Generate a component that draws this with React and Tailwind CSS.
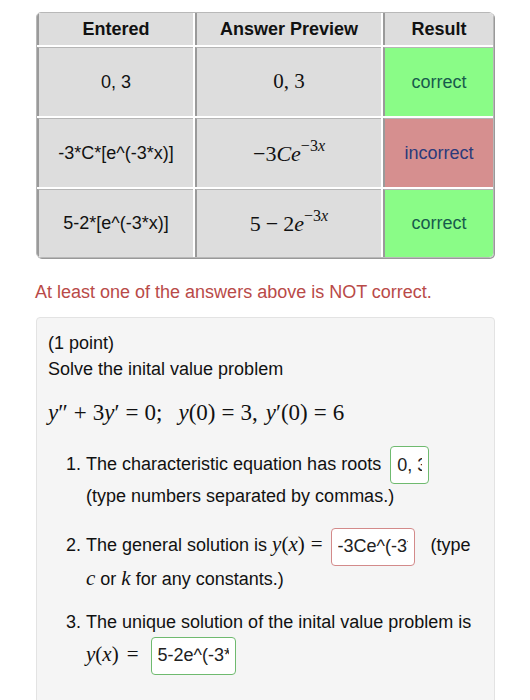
import React from "react";

const sans = { fontFamily: '"Liberation Sans", Arial, sans-serif' };

function M({ children, className = "" }) {
  return (
    <span className={`font-['Liberation_Serif',_'Times_New_Roman',_serif] ${className}`}>{children}</span>
  );
}

function I({ children }) {
  return <span className="italic">{children}</span>;
}

function Op({ children, m = "mx-[5px]" }) {
  return <span className={m}>{children}</span>;
}

function Cell({ children, bg = "bg-[#dddddd]", className = "" }) {
  return (
    <div className={`${bg} border-l-2 border-t border-l-[#9a9a9a] border-t-[#b5b5b5] flex items-center justify-center ${className}`}>
      {children}
    </div>
  );
}

function Box({ value, color, w, className = "" }) {
  return (
    <input
      readOnly
      value={value}
      className={`inline-block align-middle h-[38px] -my-[4px] rounded-[4px] border bg-white px-[6px] text-[18px] text-[#222] outline-none ${color} ${w} ${className}`}
      style={sans}
    />
  );
}

export default function App() {
  return (
    <div className="bg-white w-[530px] h-[700px] overflow-hidden text-[#111]" style={sans}>
      <div className="pt-[12px] pl-[36px]">
        <div className="w-[458px] border border-[#b8b8b8] rounded-[5px] shadow-[1px_1px_0_#999] overflow-hidden">
          <div className="grid grid-cols-[156px_186px_110px] gap-[2px] bg-white">
            <Cell className="h-[32px] border-t-0 text-[18px] font-bold">Entered</Cell>
            <Cell className="h-[32px] border-t-0 text-[18px] font-bold">Answer Preview</Cell>
            <Cell className="h-[32px] border-t-0 text-[18px] font-bold">Result</Cell>

            <Cell className="h-[69px] text-[18px]">0, 3</Cell>
            <Cell className="h-[69px]"><M className="text-[21px]">0, 3</M></Cell>
            <Cell bg="bg-[#8afc87]" className="h-[69px] text-[18px] text-[#175b4c]">correct</Cell>

            <Cell className="h-[69px] text-[18px]">-3*C*[e^(-3*x)]</Cell>
            <Cell className="h-[69px]">
              <M className="text-[22px]">−3<I>Ce</I><sup className="text-[16px] relative -top-[10px]">−3<I>x</I></sup></M>
            </Cell>
            <Cell bg="bg-[#d68f8f]" className="h-[69px] text-[18px] text-[#2b3a7a]">incorrect</Cell>

            <Cell className="h-[68px] text-[18px]">5-2*[e^(-3*x)]</Cell>
            <Cell className="h-[68px]">
              <M className="text-[22px]">5<Op>−</Op>2<I>e</I><sup className="text-[16px] relative -top-[10px]">−3<I>x</I></sup></M>
            </Cell>
            <Cell bg="bg-[#8afc87]" className="h-[68px] text-[18px] text-[#175b4c]">correct</Cell>
          </div>
        </div>
      </div>

      <div className="pl-[35px] mt-[22px] text-[18px] leading-[24px] text-[#b94a48]">
        At least one of the answers above is NOT correct.
      </div>

      <div className="ml-[36px] mt-[13px] w-[459px] h-[400px] bg-[#f5f5f5] border border-[#e3e3e3] rounded-[4px] pl-[11px] pr-[10px] pt-[12px] text-[18px] leading-[26px]">
        <div>(1 point)</div>
        <div>Solve the inital value problem</div>
        <div className="mt-[16px] text-[23px] leading-[28px]">
          <M>
            <I>y</I>″<Op m="mx-[6px]">+</Op>3<I>y</I>′<Op m="mx-[6px]">=</Op>0;<span className="ml-[16px]" />
            <I>y</I>(0)<Op m="mx-[6px]">=</Op>3,<span className="ml-[8px]" /><I>y</I>′(0)<Op m="mx-[6px]">=</Op>6
          </M>
        </div>
        <ol className="list-decimal pl-[38px] mt-[21px] leading-[32px]">
          <li>
            The characteristic equation has roots{" "}
            <Box value="0, 3" color="border-[#6fba6f]" w="w-[39px]" className="ml-[4px]" />
            <br />
            (type numbers separated by commas.)
          </li>
          <li className="mt-[16px]">
            The general solution is <M className="text-[21px]"><I>y</I>(<I>x</I>)<Op m="ml-[6px] mr-[8px]">=</Op></M>
            <Box value="-3Ce^(-3*x)" color="border-[#d38a8a]" w="w-[84px]" />
            <span className="ml-[16px]">(type</span>
            <br />
            <M className="text-[21px]"><I>c</I></M> or <M className="text-[21px]"><I>k</I></M> for any constants.)
          </li>
          <li className="mt-[11px]">
            The unique solution of the inital value problem is
            <br />
            <M className="text-[21px]"><I>y</I>(<I>x</I>)<Op m="ml-[8px] mr-[8px]">=</Op></M>
            <Box value="5-2e^(-3*x)" color="border-[#6fba6f]" w="w-[85px]" className="ml-[4px]" />
          </li>
        </ol>
      </div>
    </div>
  );
}
